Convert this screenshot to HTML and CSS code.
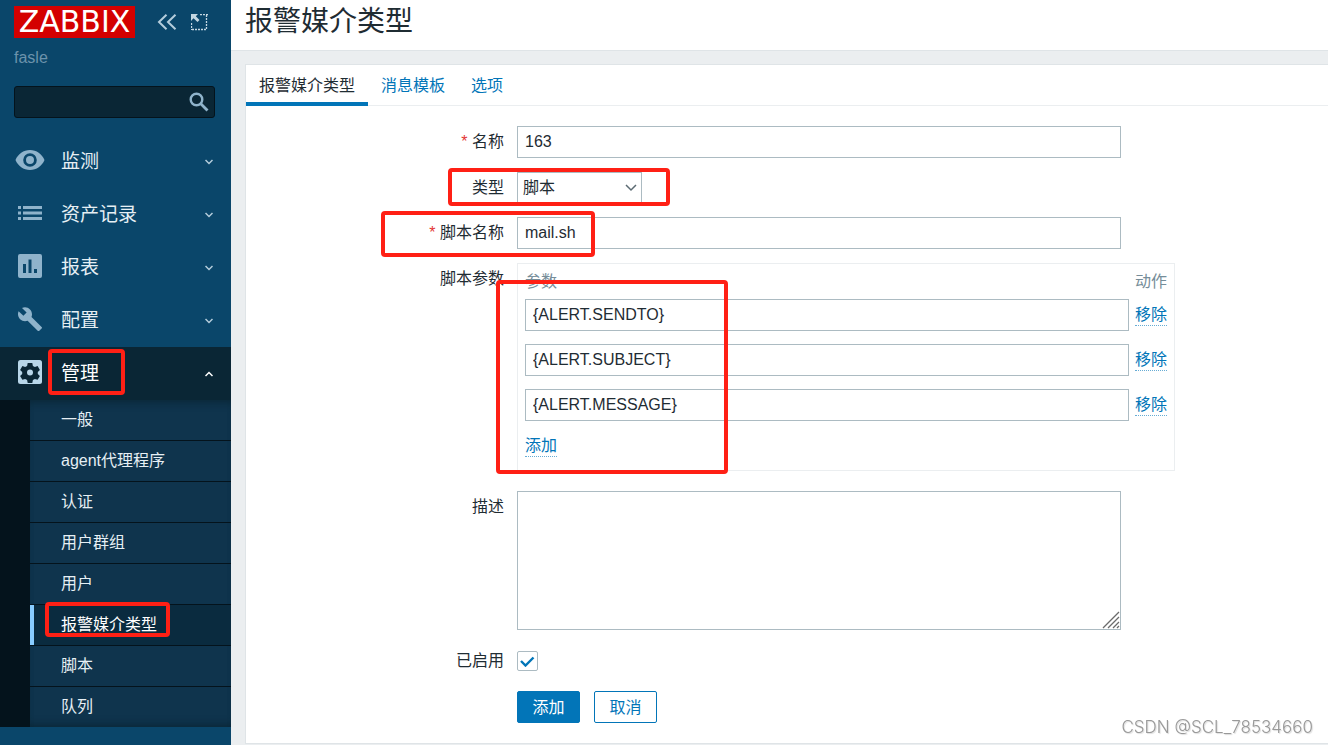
FILE: index.html
```html
<!DOCTYPE html>
<html lang="zh-CN">
<head>
    <meta charset="UTF-8">
    <meta name="viewport" content="width=device-width, initial-scale=1.0">
    <title>报警媒介类型</title>
    <link rel="stylesheet" href="styles.css">
</head>
<body>
    <aside class="sidebar">
        <div class="sidebar-header">
            <a class="logo" href="#">ZABBIX</a>
            <button class="icon-button" type="button" aria-label="收起侧边栏">
                <svg width="20" height="16" viewBox="0 0 20 16"><path d="M9.500 .800L2 8l7.500 7.200M18.500 .800L11 8l7.500 7.200" fill="none" stroke="#b5cddc" stroke-width="2"/></svg>
            </button>
            <button class="icon-button" type="button" aria-label="隐藏侧边栏">
                <svg width="17" height="17" viewBox="0 0 17 17"><path d="M9 .500h8M15.500 1v15M.500 9v7M1 15.500h15" fill="none" stroke="#c3d6e1" stroke-width="1.300" stroke-dasharray="2 1"/><path d="M0 0h7L4.800 2.200 8.500 6 6.500 8 2.500 4.300 0 7z" fill="#c3d6e1"/></svg>
            </button>
        </div>
        <div class="server-name">fasle</div>
        <form class="search">
            <input type="text" aria-label="搜索">
            <button type="button" aria-label="搜索">
                <svg width="20" height="20" viewBox="0 0 20 20"><circle cx="7.500" cy="7.500" r="5.800" fill="none" stroke="#8fb3cb" stroke-width="2.400"/><path d="M11.800 11.800l6.700 6.700" stroke="#8fb3cb" stroke-width="2.800"/></svg>
            </button>
        </form>
        <nav>
            <ul class="menu">
                <li>
                    <a class="menu-item" href="#">
                        <svg class="menu-icon" width="30" height="24" viewBox="0 0 30 24"><path d="M15 2C8.500 2 3 6 .500 12 3 18 8.500 22 15 22s12-4 14.500-10C27 6 21.500 2 15 2zm0 16.800a6.800 6.800 0 1 1 0-13.600 6.800 6.800 0 0 1 0 13.600zM15 8a4 4 0 1 0 0 8 4 4 0 0 0 0-8z" fill="#8fb3cb"/></svg>
                        <span>监测</span>
                        <svg class="arrow" width="8" height="6" viewBox="0 0 8 6"><path d="M.500 1L4 4.500 7.500 1" fill="none" stroke="#b5cddc" stroke-width="1.500"/></svg>
                    </a>
                </li>
                <li>
                    <a class="menu-item" href="#">
                        <svg class="menu-icon" width="30" height="24" viewBox="0 0 30 24"><path d="M3 5h3v3H3zM8 5h19v3H8zM3 10.500h3v3H3zM8 10.500h19v3H8zM3 16h3v3H3zM8 16h19v3H8z" fill="#8fb3cb"/></svg>
                        <span>资产记录</span>
                        <svg class="arrow" width="8" height="6" viewBox="0 0 8 6"><path d="M.500 1L4 4.500 7.500 1" fill="none" stroke="#b5cddc" stroke-width="1.500"/></svg>
                    </a>
                </li>
                <li>
                    <a class="menu-item" href="#">
                        <svg class="menu-icon" width="30" height="24" viewBox="0 0 30 24"><path d="M5 0h20a2 2 0 0 1 2 2v20a2 2 0 0 1-2 2H5a2 2 0 0 1-2-2V2a2 2 0 0 1 2-2zM8 10v9h3v-9zM13.500 5.500v13.500h3V5.500zM19 15v4h3v-4z" fill="#8fb3cb" fill-rule="evenodd"/></svg>
                        <span>报表</span>
                        <svg class="arrow" width="8" height="6" viewBox="0 0 8 6"><path d="M.500 1L4 4.500 7.500 1" fill="none" stroke="#b5cddc" stroke-width="1.500"/></svg>
                    </a>
                </li>
                <li>
                    <a class="menu-item" href="#">
                        <svg class="menu-icon" width="30" height="24" viewBox="0 0 30 24"><path d="M26.600 20L16.500 10c1-2.500.500-5.500-1.500-7.600C12.800.200 9.600-.200 7 1l4.600 4.600-3.200 3.200L3.600 4.200c-1.200 2.600-.700 5.800 1.500 8 2.100 2 5 2.500 7.500 1.500L22.700 23.700c.500.500 1.200.500 1.600 0l2.300-2.200c.500-.400.500-1.100 0-1.500z" fill="#8fb3cb"/></svg>
                        <span>配置</span>
                        <svg class="arrow" width="8" height="6" viewBox="0 0 8 6"><path d="M.500 1L4 4.500 7.500 1" fill="none" stroke="#b5cddc" stroke-width="1.500"/></svg>
                    </a>
                </li>
                <li>
                    <a class="menu-item is-open" href="#">
                        <svg class="menu-icon" width="30" height="24" viewBox="0 0 30 24"><rect x="3" width="24" height="24" rx="2.500" fill="#b8d6e9"/><path d="M12.700 3h4.600l.600 2.900 2 1.100 2.700-.900 2.300 3.900-2.100 2v1.900l2.100 2-2.300 3.900-2.700-.900-2 1.100-.600 2.900h-4.600l-.600-2.900-2-1.100-2.700.900-2.300-3.900 2.100-2V12l-2.100-2 2.300-3.900 2.700.900 2-1.100z" fill="#0a2635"/><circle cx="15" cy="12.500" r="3" fill="#b8d6e9"/></svg>
                        <span>管理</span>
                        <svg class="arrow" width="8" height="6" viewBox="0 0 8 6"><path d="M.500 5L4 1.500 7.500 5" fill="none" stroke="#fff" stroke-width="1.500"/></svg>
                        <i class="mark mark-admin"></i>
                    </a>
                    <ul class="submenu">
                        <li><a href="#">一般</a></li>
                        <li><a href="#">agent代理程序</a></li>
                        <li><a href="#">认证</a></li>
                        <li><a href="#">用户群组</a></li>
                        <li><a href="#">用户</a></li>
                        <li><a class="is-selected" href="#">报警媒介类型<i class="mark mark-media"></i></a></li>
                        <li><a href="#">脚本</a></li>
                        <li><a href="#">队列</a></li>
                    </ul>
                </li>
            </ul>
        </nav>
    </aside>

    <div class="wrapper">
        <header class="page-header">
            <h1>报警媒介类型</h1>
        </header>
        <main class="card">
            <nav class="tabs">
                <a class="active" href="#">报警媒介类型</a>
                <a href="#">消息模板</a>
                <a href="#">选项</a>
            </nav>
            <form class="form">
                <div class="row">
                    <label class="required" for="name">名称</label>
                    <div class="field"><input class="textbox" id="name" type="text" value="163"></div>
                </div>
                <div class="row">
                    <label for="type">类型</label>
                    <div class="field">
                        <div class="select">
                            <select id="type">
                                <option>脚本</option>
                            </select>
                            <svg width="12" height="8" viewBox="0 0 12 8"><path d="M1 1l5 5 5-5" fill="none" stroke="#5c6b73" stroke-width="1.500"/></svg>
                        </div>
                        <i class="mark mark-type"></i>
                    </div>
                </div>
                <div class="row">
                    <label class="required" for="script">脚本名称</label>
                    <div class="field">
                        <input class="textbox" id="script" type="text" value="mail.sh">
                        <i class="mark mark-script"></i>
                    </div>
                </div>
                <div class="row row-params">
                    <span class="label">脚本参数</span>
                    <div class="field">
                        <div class="params">
                            <table>
                                <thead>
                                    <tr><th>参数</th><th class="action">动作</th></tr>
                                </thead>
                                <tbody>
                                    <tr>
                                        <td><input class="textbox" type="text" aria-label="参数 1" value="{ALERT.SENDTO}"></td>
                                        <td class="action"><button class="link" type="button">移除</button></td>
                                    </tr>
                                    <tr>
                                        <td><input class="textbox" type="text" aria-label="参数 2" value="{ALERT.SUBJECT}"></td>
                                        <td class="action"><button class="link" type="button">移除</button></td>
                                    </tr>
                                    <tr>
                                        <td><input class="textbox" type="text" aria-label="参数 3" value="{ALERT.MESSAGE}"></td>
                                        <td class="action"><button class="link" type="button">移除</button></td>
                                    </tr>
                                </tbody>
                            </table>
                            <button class="link" type="button">添加</button>
                        </div>
                        <i class="mark mark-params"></i>
                    </div>
                </div>
                <div class="row">
                    <label for="description">描述</label>
                    <div class="field">
                        <div class="textarea">
                            <textarea id="description"></textarea>
                            <svg width="18" height="18" viewBox="0 0 18 18"><path d="M1 17L17 1M6 17L17 6M11 17l6-6M15 17l2-2" stroke="#6b6b6b" stroke-width="1.300"/></svg>
                        </div>
                    </div>
                </div>
                <div class="row row-enabled">
                    <label for="enabled">已启用</label>
                    <div class="field">
                        <div class="checkbox">
                            <input id="enabled" type="checkbox" checked>
                            <svg width="15" height="11" viewBox="0 0 15 11"><path d="M1 5l4.500 4.500L13.500 1.500" fill="none" stroke="#0275b8" stroke-width="2.400"/></svg>
                        </div>
                    </div>
                </div>
                <div class="buttons">
                    <button class="button primary" type="button">添加</button>
                    <button class="button" type="button">取消</button>
                </div>
            </form>
        </main>
    </div>
    <div class="watermark">CSDN @SCL_78534660</div>
</body>
</html>
```
FILE: styles.css
```css
* {
    box-sizing: border-box;
}
body {
    display: flex;
    min-height: 100vh;
    margin: 0;
    font-family: "Liberation Sans", "Noto Sans CJK SC", sans-serif;
    font-size: 16px;
    line-height: 20px;
    color: #1f2c33;
    background-color: #ebeef0;
}
a {
    color: #0275b8;
    text-decoration: none;
}
button, input, select, textarea {
    margin: 0;
    font: inherit;
    color: inherit;
}
button {
    padding: 0;
    border: none;
    background: none;
    cursor: pointer;
}
svg {
    display: block;
}
ul {
    list-style: none;
    margin: 0;
    padding: 0;
}

/* sidebar */
.sidebar {
    flex: 0 0 231px;
    min-width: 0;
    background-color: #0a466a;
}
.sidebar-header {
    display: flex;
    align-items: center;
    padding: 6px 16px 0 14px;
}
.logo {
    width: 121px;
    margin-right: 8px;
    font-family: "DejaVu Sans", sans-serif;
    font-size: 30px;
    line-height: 32px;
    text-align: center;
    color: #fff;
    background-color: #d40000;
}
.icon-button {
    margin-left: 14px;
}
.server-name {
    padding: 10px 14px 0;
    color: #6c93ac;
}
.search {
    position: relative;
    margin: 18px 16px 17px 14px;
}
.search input {
    display: block;
    width: 100%;
    height: 32px;
    padding: 0 32px 0 8px;
    border: 1px solid #04131c;
    border-radius: 3px;
    color: #fff;
    background-color: #0a2635;
}
.search button {
    position: absolute;
    top: 6px;
    right: 6px;
}
.menu-item {
    display: flex;
    align-items: center;
    position: relative;
    height: 53px;
    padding: 0 18px 0 15px;
    font-size: 19px;
    color: #e6eff4;
}
.menu-icon {
    margin-bottom: 4px;
}
.menu-item span {
    flex: 1;
    margin-left: 16px;
}
.menu-item.is-open {
    color: #fff;
    background-color: #0a2635;
}
.submenu {
    border-left: 30px solid #04131c;
    background-color: #0f344d;
    box-shadow: inset 0 8px 8px -6px #0a2635, inset 0 -8px 8px -6px #0a2635;
}
.submenu li + li {
    border-top: 1px solid #04131c;
}
.submenu a {
    display: block;
    position: relative;
    padding: 10px 0 10px 31px;
    color: #e6eff4;
}
.submenu .is-selected {
    padding-left: 27px;
    border-left: 4px solid #88ccff;
    color: #fff;
    background-color: #0a2b3f;
}

/* content */
.wrapper {
    flex: 1;
    min-width: 0;
}
.page-header {
    height: 51px;
    padding: 0 14px;
    border-bottom: 1px solid #dfe4e7;
    background-color: #fff;
}
h1 {
    margin: 0;
    font-size: 28px;
    font-weight: normal;
    line-height: 44px;
}
.card {
    margin: 13px 0 0 14px;
    border: 1px solid #dfe4e7;
    border-right: none;
    background-color: #fff;
}
.tabs {
    display: flex;
    border-bottom: 1px solid #ebeef0;
}
.tabs a {
    padding: 11px 13px 9px;
    line-height: 20px;
}
.tabs .active {
    margin-bottom: -1px;
    padding-bottom: 6px;
    border-bottom: 4px solid #0275b8;
    color: #1f2c33;
}
.form {
    padding: 20px 0;
}
.row {
    display: flex;
    gap: 13px;
    margin-bottom: 14px;
}
.row > label, .row > .label {
    flex: 0 0 258px;
    line-height: 31px;
    text-align: right;
}
.required::before {
    content: "* ";
    color: #e33734;
}
.field {
    flex: 1;
    position: relative;
    min-width: 0;
}
.textbox {
    display: block;
    width: 100%;
    max-width: 604px;
    height: 32px;
    padding: 0 7px;
    border: 1px solid #acbbc2;
    background-color: #fff;
}
.select {
    position: relative;
    width: 125px;
}
.select select {
    display: block;
    width: 100%;
    height: 31px;
    padding: 0 24px 0 5px;
    border: 1px solid #acbbc2;
    border-radius: 0;
    background-color: #fff;
    appearance: none;
}
.select svg {
    position: absolute;
    top: 12px;
    right: 5px;
    pointer-events: none;
}
.row-params {
    margin-bottom: 20px;
}
.params {
    max-width: 658px;
    padding: 0 7px 13px;
    border: 1px solid #ebeef0;
}
.params table {
    width: 100%;
    margin-bottom: 2px;
    border-collapse: collapse;
}
.params th {
    height: 35px;
    padding: 0;
    font-weight: normal;
    text-align: left;
    color: #768d99;
}
.params td {
    padding: 0 0 13px;
}
.params .action {
    width: 38px;
    padding-left: 6px;
}
.link {
    display: block;
    line-height: 20px;
    color: #0275b8;
    border-bottom: 1px dotted rgba(2, 117, 184, 0.6);
}
.textarea {
    position: relative;
    max-width: 604px;
}
.textarea textarea {
    display: block;
    width: 100%;
    height: 139px;
    padding: 6px 7px;
    border: 1px solid #acbbc2;
    resize: none;
}
.textarea svg {
    position: absolute;
    right: 1px;
    bottom: 1px;
}
.row-enabled {
    align-items: center;
    margin: 15px 0;
}
.checkbox {
    position: relative;
    width: 21px;
}
.checkbox input {
    display: block;
    width: 21px;
    height: 20px;
    border: 1px solid #acbbc2;
    border-radius: 2px;
    background-color: #fff;
    appearance: none;
}
.checkbox svg {
    position: absolute;
    top: 5px;
    left: 3px;
    pointer-events: none;
}
.checkbox input:not(:checked) + svg {
    display: none;
}
.buttons {
    display: flex;
    gap: 14px;
    padding-left: 271px;
}
.button {
    min-width: 63px;
    height: 32px;
    padding: 2px 14px 0;
    border: 1px solid #0275b8;
    border-radius: 2px;
    color: #0275b8;
    background-color: #fff;
}
.button.primary {
    color: #fff;
    background-color: #0275b8;
}

/* red highlight frames */
.mark {
    position: absolute;
    border: 4px solid #ff2015;
    border-radius: 4px;
    pointer-events: none;
}
.mark-admin {
    top: 2px;
    left: 48px;
    width: 77px;
    height: 46px;
}
.mark-media {
    top: -3px;
    left: 11px;
    width: 125px;
    height: 35px;
}
.mark-type {
    top: -4px;
    left: -69px;
    width: 222px;
    height: 38px;
}
.mark-script {
    z-index: 1;
    top: -6px;
    left: -136px;
    width: 214px;
    height: 46px;
}
.mark-params {
    top: 17px;
    left: -21px;
    width: 232px;
    height: 194px;
}

.watermark {
    position: fixed;
    right: 15px;
    bottom: 8px;
    font-family: Inter, "Liberation Sans", sans-serif;
    font-size: 17px;
    font-weight: 300;
    color: #999;
    text-shadow: 1px 1px 1px #ddd;
}
```
